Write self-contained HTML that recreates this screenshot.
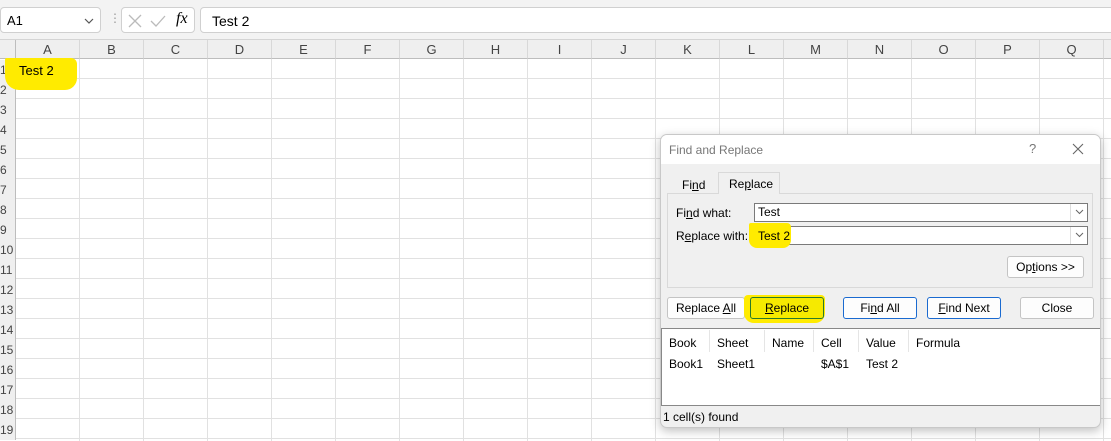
<!DOCTYPE html><html><head><style>
*{margin:0;padding:0;box-sizing:border-box}
body{width:1111px;height:441px;overflow:hidden;background:#fff;font-family:"Liberation Sans",sans-serif;position:relative;font-size:12px;color:#000}
.a{position:absolute}
.top{left:0;top:0;width:1111px;height:40px;background:#f3f3f3;border-bottom:1px solid #d4d4d4}
.box{background:#fff;border:1px solid #d0d0d0;border-radius:4px}
.grid{left:16px;top:59px;width:1095px;height:382px;background:
repeating-linear-gradient(90deg,transparent 0 63px,#e1e1e1 63px 64px),
repeating-linear-gradient(180deg,transparent 0 19px,#e1e1e1 19px 20px);background-color:#fff}
.ch{top:40px;height:19px;width:64px;text-align:center;line-height:19px;font-size:13px;color:#444;border-right:1px solid #d8d8d8;background:#efefef;border-bottom:1px solid #bdbdbd}
.rh{left:0;width:16px;height:20px;font-size:12px;color:#444;line-height:20px;background:#efefef;border-right:1px solid #bdbdbd}
.dlg{left:660px;top:134px;width:441px;height:294px;background:#f0f0f0;border:1px solid #c8c8c8;border-radius:7px;box-shadow:0 3px 10px rgba(0,0,0,.25);overflow:hidden}
.btn{position:absolute;height:22px;background:#fdfdfd;border:1px solid #c4c4c4;border-radius:3px;text-align:center;line-height:20px;font-size:12px}
.inp{position:absolute;left:93px;width:334px;height:19px;background:#fff;border:1px solid #7a7a7a;line-height:17px;padding-left:3px}
.dd{position:absolute;right:0;top:0;width:17px;height:17px;border-left:1px solid #ddd}
.dd svg{position:absolute;left:4px;top:5px}
u{text-decoration:underline}
</style></head><body>
<div class="a top"></div>
<div class="a box" style="left:0;top:7px;width:101px;height:26px"><span class="a" style="left:6px;top:5px;font-size:13px">A1</span><svg class="a" style="left:83px;top:10px" width="10" height="6"><path d="M1 1L5 5L9 1" stroke="#555" fill="none" stroke-width="1.2"/></svg></div>
<div class="a" style="left:109px;top:11px;color:#999;font-size:12px">⋮</div>
<div class="a box" style="left:121px;top:7px;width:74px;height:26px"><svg class="a" style="left:6px;top:6px" width="14" height="14"><path d="M1 1L13 13M13 1L1 13" stroke="#bbb" stroke-width="1.3"/></svg><svg class="a" style="left:28px;top:6px" width="16" height="14"><path d="M1 7L6 12L15 2" stroke="#bbb" fill="none" stroke-width="1.3"/></svg><span class="a" style="left:54px;top:2px;font-family:'Liberation Serif',serif;font-style:italic;font-size:16px">fx</span></div>
<div class="a box" style="left:200px;top:7px;width:920px;height:26px"><span class="a" style="left:11px;top:5px;font-size:14px">Test 2</span></div>
<div class="a" style="left:0;top:40px;width:16px;height:19px;background:#efefef;border-right:1px solid #bdbdbd;border-bottom:1px solid #bdbdbd"></div>
<div class="a grid"></div>
<div class="a ch" style="left:16px">A</div><div class="a ch" style="left:80px">B</div><div class="a ch" style="left:144px">C</div><div class="a ch" style="left:208px">D</div><div class="a ch" style="left:272px">E</div><div class="a ch" style="left:336px">F</div><div class="a ch" style="left:400px">G</div><div class="a ch" style="left:464px">H</div><div class="a ch" style="left:528px">I</div><div class="a ch" style="left:592px">J</div><div class="a ch" style="left:656px">K</div><div class="a ch" style="left:720px">L</div><div class="a ch" style="left:784px">M</div><div class="a ch" style="left:848px">N</div><div class="a ch" style="left:912px">O</div><div class="a ch" style="left:976px">P</div><div class="a ch" style="left:1040px">Q</div><div class="a ch" style="left:1104px"></div>
<div class="a rh" style="top:60px">1</div><div class="a rh" style="top:80px">2</div><div class="a rh" style="top:100px">3</div><div class="a rh" style="top:120px">4</div><div class="a rh" style="top:140px">5</div><div class="a rh" style="top:160px">6</div><div class="a rh" style="top:180px">7</div><div class="a rh" style="top:200px">8</div><div class="a rh" style="top:220px">9</div><div class="a rh" style="top:240px">10</div><div class="a rh" style="top:260px">11</div><div class="a rh" style="top:280px">12</div><div class="a rh" style="top:300px">13</div><div class="a rh" style="top:320px">14</div><div class="a rh" style="top:340px">15</div><div class="a rh" style="top:360px">16</div><div class="a rh" style="top:380px">17</div><div class="a rh" style="top:400px">18</div><div class="a rh" style="top:420px">19</div>
<div class="a" style="left:5px;top:58px;width:72px;height:32px;background:#ffeb00;border-radius:2px 6px 12px 14px"></div>
<div class="a" style="left:19px;top:63px;font-size:13px">Test 2</div>
<div class="a dlg">
<div class="a" style="left:0;top:0;width:441px;height:29px;background:#fff"></div>
<div class="a" style="left:8px;top:8px;color:#777;font-size:12px">Find and Replace</div>
<div class="a" style="left:368px;top:6px;color:#777;font-size:13px">?</div>
<svg class="a" style="left:411px;top:8px" width="12" height="12"><path d="M1 1L11 11M11 1L1 11" stroke="#666" stroke-width="1.1"/></svg>
<div class="a" style="left:6px;top:58px;width:426px;height:95px;border:1px solid #d9d9d9;background:#f0f0f0"></div>
<div class="a" style="left:57px;top:37px;width:62px;height:22px;background:#f0f0f0;border:1px solid #d9d9d9;border-bottom:none"></div>
<div class="a" style="left:21px;top:43px">Fi<u>n</u>d</div>
<div class="a" style="left:68px;top:42px">Re<u>p</u>lace</div>
<div class="a" style="left:15px;top:71px">Fi<u>n</u>d what:</div>
<div class="a" style="left:15px;top:94px">R<u>e</u>place with:</div>
<div class="inp" style="top:68px">Test<div class="dd"><svg width="9" height="6"><path d="M1 1L4.5 4.5L8 1" stroke="#666" fill="none"/></svg></div></div>
<div class="inp" style="top:91px"><div class="dd"><svg width="9" height="6"><path d="M1 1L4.5 4.5L8 1" stroke="#666" fill="none"/></svg></div></div>
<div class="a" style="left:88px;top:88px;width:42px;height:25px;background:#ffeb00;border-radius:2px 4px 8px 8px"></div>
<div class="a" style="left:97px;top:94px">Test 2</div>
<div class="btn" style="left:346px;top:121px;width:77px">Op<u>t</u>ions &gt;&gt;</div>
<div class="btn" style="left:6px;top:162px;width:78px">Replace <u>A</u>ll</div>
<div class="a" style="left:83px;top:160px;width:81px;height:28px;background:#ffeb00;border-radius:4px 4px 10px 10px"></div>
<div class="btn" style="left:89px;top:162px;width:74px;background:#f6ea00;border-color:#2a7a2a"><u>R</u>eplace</div>
<div class="btn" style="left:182px;top:162px;width:74px;border-color:#1a6ad0">Fi<u>n</u>d All</div>
<div class="btn" style="left:266px;top:162px;width:74px;border-color:#1a6ad0"><u>F</u>ind Next</div>
<div class="btn" style="left:359px;top:162px;width:74px">Close</div>
<div class="a" style="left:0;top:193px;width:440px;height:78px;background:#fff;border:1px solid #888"></div>
<div class="a" style="left:8px;top:201px">Book</div><div class="a" style="left:56px;top:201px">Sheet</div><div class="a" style="left:111px;top:201px">Name</div><div class="a" style="left:160px;top:201px">Cell</div><div class="a" style="left:205px;top:201px">Value</div><div class="a" style="left:255px;top:201px">Formula</div>
<div class="a" style="left:48px;top:195px;width:1px;height:22px;background:#e5e5e5"></div><div class="a" style="left:103px;top:195px;width:1px;height:22px;background:#e5e5e5"></div><div class="a" style="left:152px;top:195px;width:1px;height:22px;background:#e5e5e5"></div><div class="a" style="left:197px;top:195px;width:1px;height:22px;background:#e5e5e5"></div><div class="a" style="left:247px;top:195px;width:1px;height:22px;background:#e5e5e5"></div>
<div class="a" style="left:8px;top:222px">Book1</div><div class="a" style="left:56px;top:222px">Sheet1</div><div class="a" style="left:160px;top:222px">$A$1</div><div class="a" style="left:205px;top:222px">Test 2</div>
<div class="a" style="left:2px;top:275px">1 cell(s) found</div>
</div>
</body></html>
